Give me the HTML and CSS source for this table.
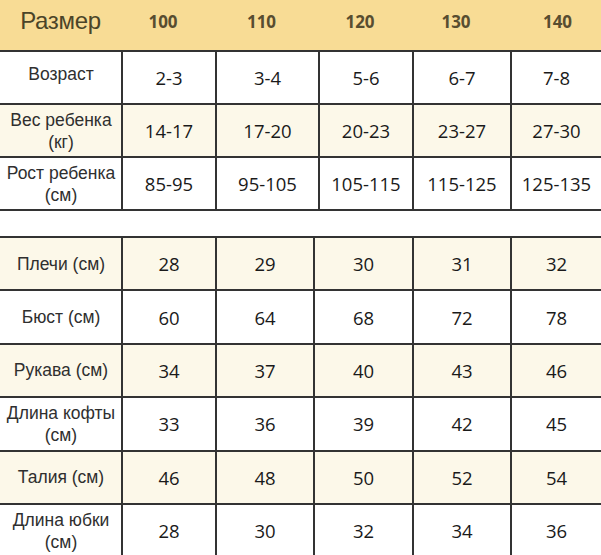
FILE: index.html
```html
<!DOCTYPE html>
<html lang="ru">
<head>
<meta charset="utf-8">
<title>Размер</title>
<link rel="stylesheet" href="styles.css">
</head>
<body>
<div class="chart">
  <div class="head">
    <div class="h-label">Размер</div>
    <div class="h-num">100</div>
    <div class="h-num">110</div>
    <div class="h-num">120</div>
    <div class="h-num">130</div>
    <div class="h-num">140</div>
  </div>

  <div class="block top">
    <div class="row">
      <div class="lbl up">Возраст</div>
      <div class="val">2-3</div><div class="val">3-4</div><div class="val">5-6</div><div class="val">6-7</div><div class="val">7-8</div>
    </div>
    <div class="row cream">
      <div class="lbl">Вес ребенка<br>(кг)</div>
      <div class="val">14-17</div><div class="val">17-20</div><div class="val">20-23</div><div class="val">23-27</div><div class="val">27-30</div>
    </div>
    <div class="row">
      <div class="lbl">Рост ребенка<br>(см)</div>
      <div class="val">85-95</div><div class="val">95-105</div><div class="val">105-115</div><div class="val">115-125</div><div class="val">125-135</div>
    </div>
  </div>

  <div class="block bottom">
    <div class="row cream">
      <div class="lbl">Плечи (см)</div>
      <div class="val">28</div><div class="val">29</div><div class="val">30</div><div class="val">31</div><div class="val">32</div>
    </div>
    <div class="row">
      <div class="lbl">Бюст (см)</div>
      <div class="val">60</div><div class="val">64</div><div class="val">68</div><div class="val">72</div><div class="val">78</div>
    </div>
    <div class="row cream">
      <div class="lbl">Рукава (см)</div>
      <div class="val">34</div><div class="val">37</div><div class="val">40</div><div class="val">43</div><div class="val">46</div>
    </div>
    <div class="row">
      <div class="lbl">Длина кофты<br>(см)</div>
      <div class="val">33</div><div class="val">36</div><div class="val">39</div><div class="val">42</div><div class="val">45</div>
    </div>
    <div class="row cream">
      <div class="lbl">Талия (см)</div>
      <div class="val">46</div><div class="val">48</div><div class="val">50</div><div class="val">52</div><div class="val">54</div>
    </div>
    <div class="row">
      <div class="lbl">Длина юбки<br>(см)</div>
      <div class="val">28</div><div class="val">30</div><div class="val">32</div><div class="val">34</div><div class="val">36</div>
    </div>
  </div>
</div>
</body>
</html>
```

FILE: styles.css
```css
html, body {
  margin: 0;
  padding: 0;
  background: #ffffff;
}

body {
  width: 601px;
  height: 555px;
  overflow: hidden;
}

.chart {
  width: 601px;
  display: flex;
  flex-direction: column;
}

.head {
  height: 50px;
  background: #f8dc95;
  display: grid;
  grid-template-columns: 121px 94px 103px 94px 98px 91px;
  align-items: center;
  padding-bottom: 8px;
  box-sizing: border-box;
}

.h-label {
  font-family: "Liberation Sans", Arial, sans-serif;
  font-size: 24px;
  color: #4b4428;
  text-align: center;
  letter-spacing: -0.3px;
}

.h-num {
  font-family: "Open Sans", sans-serif;
  font-weight: 700;
  font-size: 17px;
  color: #584d30;
  text-align: center;
  padding-right: 10px;
}

.h-num:last-child {
  padding-right: 0;
  padding-left: 4px;
}

.block {
  display: flex;
  flex-direction: column;
  border-bottom: 2px solid #333333;
}

.block.top .row {
  grid-template-columns: 121px 94px 103px 94px 98px 91px;
  height: 53px;
}

.block.bottom {
  margin-top: 25px;
  border-bottom: none;
}

.block.bottom .row {
  grid-template-columns: 121px 94px 98px 99px 98px 91px;
  height: 53.4px;
}

.row {
  display: grid;
  border-top: 2px solid #333333;
  box-sizing: border-box;
  background: #ffffff;
}

.row.cream {
  background: #fcf8e9;
}

.lbl {
  display: flex;
  align-items: center;
  justify-content: center;
  text-align: center;
  font-family: "Liberation Sans", Arial, sans-serif;
  font-size: 17.5px;
  line-height: 22px;
  color: #2f2f2f;
  padding-left: 1px;
}

.lbl.up {
  padding-bottom: 7px;
}

.val {
  display: flex;
  align-items: center;
  justify-content: center;
  border-left: 2px solid #333333;
  font-family: "Open Sans", sans-serif;
  font-size: 18.5px;
  color: #1a1a1a;
}
```
